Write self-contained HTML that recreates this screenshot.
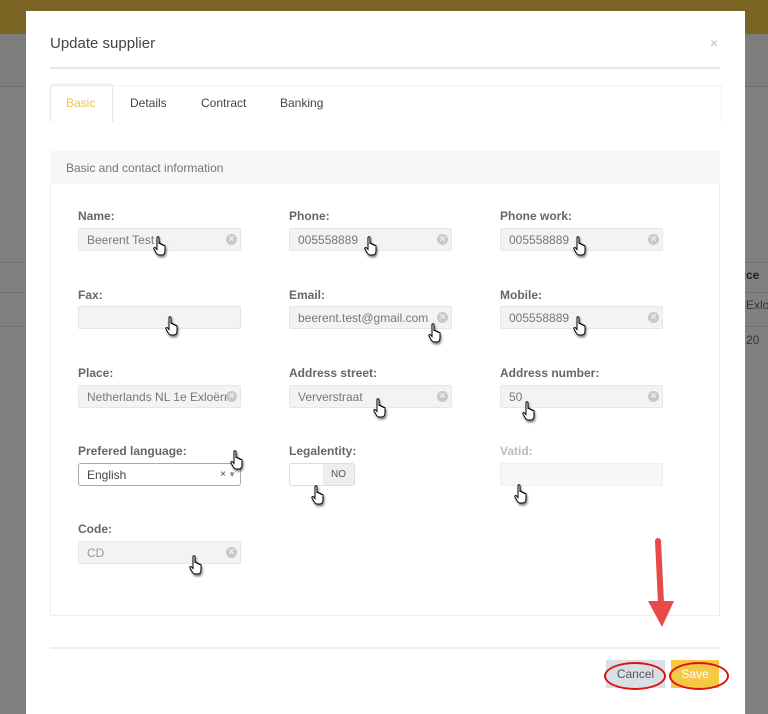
<!DOCTYPE html><html><head><style>
body{margin:0;width:768px;height:714px;overflow:hidden;background:#808080;font-family:"Liberation Sans",sans-serif;position:relative}
.a{position:absolute}
.lbl{position:absolute;font-size:12px;font-weight:bold;color:#666}
.in{position:absolute;background:#f3f3f3;border:1px solid #e6e6e6;border-radius:2px;font-size:12px;color:#777;line-height:22px;padding-left:8px;box-sizing:border-box;width:163px;height:23px;overflow:hidden;white-space:nowrap}
.x{position:absolute;right:3px;top:5px;width:11px;height:11px;border-radius:50%;background:#c8c8c8;color:#f3f3f3;font-size:10px;line-height:11px;text-align:center;font-weight:bold}
.h{position:absolute;width:16px;height:20px;filter:drop-shadow(1px 2px 1px rgba(0,0,0,.5))}
</style></head><body>
<svg width="0" height="0" style="position:absolute"><defs><symbol id="hd" viewBox="0 0 16 20"><path d="M4 1.5c0-1 2-1 2 0V8c0-1 2-1 2 0v1c0-1 2-1 2 0v1c0-1 2-1 2 0v5c0 2-1 4-3 4H6c-1.5 0-2-1-3-2.5L1 13c-.7-1 .6-2 1.4-1.2L4 13.5Z" fill="#fff" stroke="#000" stroke-width="1"/></symbol></defs></svg>
<div class="a" style="left:0;top:0;width:768px;height:34px;background:#7a6524"></div>
<div class="a" style="left:0;top:34px;width:768px;height:52px;background:#7d7d7d;border-bottom:1px solid #6f6f6f"></div>
<div class="a" style="left:0;top:262px;width:768px;height:1px;background:#727272"></div>
<div class="a" style="left:0;top:292px;width:768px;height:1px;background:#727272"></div>
<div class="a" style="left:0;top:326px;width:768px;height:1px;background:#727272"></div>
<div class="a" style="left:746px;top:268px;font-size:12px;font-weight:bold;color:#222">ce</div>
<div class="a" style="left:746px;top:298px;font-size:12px;color:#333">Exloë</div>
<div class="a" style="left:746px;top:333px;font-size:12px;color:#333">20</div>
<div class="a" style="left:26px;top:11px;width:719px;height:703px;background:#fff"></div>
<div class="a" style="left:50px;top:35px;font-size:15px;color:#444">Update supplier</div>
<div class="a" style="left:710px;top:35px;font-size:14px;color:#bbb">×</div>
<div class="a" style="left:50px;top:67px;width:670px;height:2px;background:#e6e6e6"></div>
<div class="a" style="left:50px;top:85px;width:670px;height:36px;border:1px solid #f3f3f3;border-bottom:none"></div>
<div class="a" style="left:50px;top:85px;width:61px;height:36px;background:#fff;border:1px solid #e8e8e8;border-bottom:none;border-radius:3px 3px 0 0;box-shadow:0 -1px 2px #eee"></div>
<div class="a" style="left:66px;top:96px;font-size:12px;color:#f5c242">Basic</div>
<div class="a" style="left:130px;top:96px;font-size:12px;color:#444">Details</div>
<div class="a" style="left:201px;top:96px;font-size:12px;color:#444">Contract</div>
<div class="a" style="left:280px;top:96px;font-size:12px;color:#444">Banking</div>
<div class="a" style="left:50px;top:151px;width:670px;height:465px;border:1px solid #eee;box-sizing:border-box"></div>
<div class="a" style="left:50px;top:151px;width:670px;height:33px;background:#f7f7f7"></div>
<div class="a" style="left:66px;top:161px;font-size:12px;color:#777">Basic and contact information</div>

<div class="lbl" style="left:78px;top:209px">Name:</div><div class="in" style="left:78px;top:228px">Beerent Test<span class="x">×</span></div>
<div class="lbl" style="left:289px;top:209px">Phone:</div><div class="in" style="left:289px;top:228px">005558889<span class="x">×</span></div>
<div class="lbl" style="left:500px;top:209px">Phone work:</div><div class="in" style="left:500px;top:228px">005558889<span class="x">×</span></div>
<div class="lbl" style="left:78px;top:288px">Fax:</div><div class="in" style="left:78px;top:306px"></div>
<div class="lbl" style="left:289px;top:288px">Email:</div><div class="in" style="left:289px;top:306px">beerent.test@gmail.com<span class="x">×</span></div>
<div class="lbl" style="left:500px;top:288px">Mobile:</div><div class="in" style="left:500px;top:306px">005558889<span class="x">×</span></div>
<div class="lbl" style="left:78px;top:366px">Place:</div><div class="in" style="left:78px;top:385px">Netherlands NL 1e Exloërm<span class="x">×</span></div>
<div class="lbl" style="left:289px;top:366px">Address street:</div><div class="in" style="left:289px;top:385px">Ververstraat<span class="x">×</span></div>
<div class="lbl" style="left:500px;top:366px">Address number:</div><div class="in" style="left:500px;top:385px">50<span class="x">×</span></div>
<div class="lbl" style="left:78px;top:444px">Prefered language:</div>
<div class="in" style="left:78px;top:463px;background:#fff;border-color:#aaa;color:#444;border-radius:3px">English<span class="a" style="right:14px;top:0;font-size:10px;color:#444">×</span><span class="a" style="right:4px;top:0;font-size:8px;color:#888">▼</span></div>
<div class="lbl" style="left:289px;top:444px">Legalentity:</div>
<div class="a" style="left:289px;top:463px;width:64px;height:21px;border:1px solid #ddd;border-radius:3px;overflow:hidden"><div class="a" style="left:33px;top:0;width:31px;height:21px;background:#eee;font-size:10px;color:#555;text-align:center;line-height:21px">NO</div></div>
<div class="lbl" style="left:500px;top:444px;color:#bbb">Vatid:</div><div class="in" style="left:500px;top:463px;background:#f7f7f7;border-color:#eee"></div>
<div class="lbl" style="left:78px;top:522px">Code:</div><div class="in" style="left:78px;top:541px;color:#999">CD<span class="x">×</span></div>

<svg class="h" style="left:153px;top:236px"><use href="#hd"/></svg>
<svg class="h" style="left:364px;top:236px"><use href="#hd"/></svg>
<svg class="h" style="left:573px;top:236px"><use href="#hd"/></svg>
<svg class="h" style="left:165px;top:316px"><use href="#hd"/></svg>
<svg class="h" style="left:428px;top:323px"><use href="#hd"/></svg>
<svg class="h" style="left:573px;top:316px"><use href="#hd"/></svg>
<svg class="h" style="left:373px;top:398px"><use href="#hd"/></svg>
<svg class="h" style="left:522px;top:401px"><use href="#hd"/></svg>
<svg class="h" style="left:230px;top:450px"><use href="#hd"/></svg>
<svg class="h" style="left:311px;top:485px"><use href="#hd"/></svg>
<svg class="h" style="left:514px;top:484px"><use href="#hd"/></svg>
<svg class="h" style="left:189px;top:555px"><use href="#hd"/></svg>

<div class="a" style="left:50px;top:647px;width:670px;height:2px;background:#eee"></div>
<svg class="a" style="left:640px;top:535px" width="40" height="95"><line x1="18" y1="6" x2="21" y2="68" stroke="#e84a4a" stroke-width="6" stroke-linecap="round"/><polygon points="8,66 34,66 22,92" fill="#e84a4a"/></svg>
<div class="a" style="left:606px;top:660px;width:59px;height:28px;background:#d8e0e6;color:#555;font-size:12px;text-align:center;line-height:28px">Cancel</div>
<div class="a" style="left:671px;top:660px;width:48px;height:28px;background:#f6c944;color:#fff;font-size:12px;text-align:center;line-height:28px">Save</div>
<div class="a" style="left:604px;top:662px;width:58px;height:24px;border:2px solid #d11;border-radius:50%"></div>
<div class="a" style="left:669px;top:662px;width:56px;height:24px;border:2px solid #d11;border-radius:50%"></div>
</body></html>
